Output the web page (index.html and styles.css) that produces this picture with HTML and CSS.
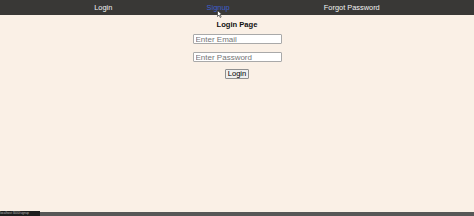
FILE: index.html
```html
<!DOCTYPE html>
<html lang="en">
<head>
    <meta charset="UTF-8">
    <meta name="viewport" content="width=device-width, initial-scale=1.0">
    <title>Login</title>
    <link rel="stylesheet" href="styles.css">
</head>
<body>
    <nav class="navbar">
        <a href="#" class="nav-link">Login</a>
        <a href="#" class="nav-link active">Signup
            <svg class="cursor" width="6" height="8" viewBox="0 0 6 8"><path d="M0.5 0.5 L0.5 6.5 L2 5 L3.2 7.5 L4.2 7 L3 4.6 L5 4.6 Z" fill="#fff" stroke="#222" stroke-width="0.6"/></svg>
        </a>
        <a href="#" class="nav-link">Forgot Password</a>
    </nav>

    <main class="login">
        <h3 class="title">Login Page</h3>
        <form class="login-form">
            <input type="email" class="field" placeholder="Enter Email">
            <input type="password" class="field" placeholder="Enter Password">
            <button type="submit" class="btn">Login</button>
        </form>
    </main>

    <div class="status-strip">
        <span class="status-url">localhost:3000/signup</span>
    </div>
</body>
</html>
```

FILE: styles.css
```css
html, body {
    height: 100%;
}
body {
    margin: 0;
    background-color: #faf0e6;
    font-family: 'Liberation Sans', Arial, sans-serif;
    display: flex;
    flex-direction: column;
}
.navbar {
    height: 15px;
    background-color: #393836;
    display: flex;
    justify-content: space-evenly;
    align-items: center;
}
.nav-link {
    color: #f2f2f2;
    text-decoration: none;
    font-size: 7.4px;
    position: relative;
}
.nav-link.active {
    color: #3f5fd0;
}
.cursor {
    position: absolute;
    left: 10px;
    top: 7px;
}
.login {
    flex: 1;
    display: flex;
    flex-direction: column;
    align-items: center;
}
.title {
    margin: 5px 0 0;
    font-size: 7.6px;
    font-weight: bold;
    color: #111;
}
.login-form {
    display: flex;
    flex-direction: column;
    align-items: center;
    margin-top: 5px;
}
.field {
    width: 89px;
    height: 10px;
    box-sizing: border-box;
    padding: 0 2px;
    margin-bottom: 8px;
    border: 1px solid #a9a9a9;
    border-radius: 1px;
    background: #fff;
    font-family: 'Liberation Sans', Arial, sans-serif;
    font-size: 8px;
}
.field::placeholder {
    color: #757575;
}
.btn {
    height: 10px;
    padding: 0 2px;
    margin-top: -1px;
    font-family: 'Liberation Sans', Arial, sans-serif;
    font-size: 7.6px;
    line-height: 1;
    border: 1px solid #8f8f8f;
    border-radius: 1px;
    background: #efefef;
    color: #000;
}
.status-strip {
    height: 4px;
    background-color: #575757;
    position: relative;
}
.status-url {
    position: absolute;
    left: 0;
    bottom: 0;
    height: 5px;
    width: 40px;
    background: #1e1e1e;
    color: #bbb;
    font-size: 3px;
    line-height: 5px;
    overflow: hidden;
    white-space: nowrap;
}
```
